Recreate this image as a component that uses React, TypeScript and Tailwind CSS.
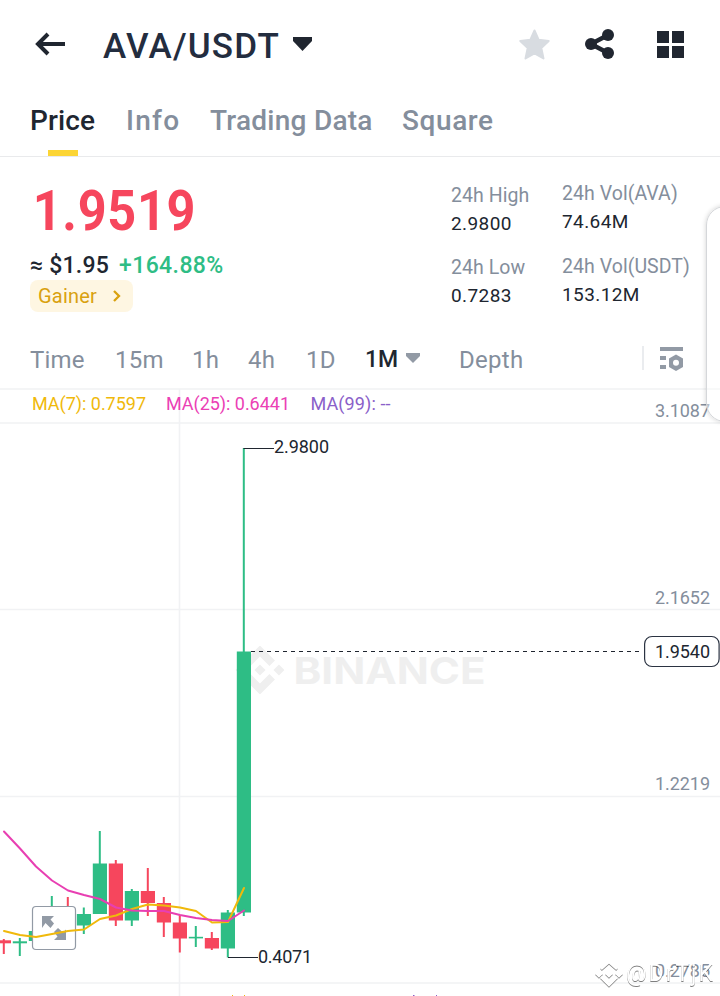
import { SiBinance } from 'react-icons/si'

const tabs = [
  { label: 'Price', active: true, className: 'w-[65px] tracking-[0.1px]' },
  { label: 'Info', active: false, className: 'w-[54px] pl-px tracking-[1.3px]' },
  { label: 'Trading Data', active: false, className: 'w-[162px] pl-px tracking-[0.25px]' },
  { label: 'Square', active: false, className: 'w-[92px] pl-px tracking-[0.6px]' }
]

const stats = [
  [
    { label: '24h High', value: '2.9800' },
    { label: '24h Low', value: '0.7283' }
  ],
  [
    { label: '24h Vol(AVA)', value: '74.64M' },
    { label: '24h Vol(USDT)', value: '153.12M' }
  ]
]

const intervals = [
  { label: 'Time', className: 'w-[85px]' },
  { label: '15m', className: 'w-[77px]' },
  { label: '1h', className: 'w-[56px]' },
  { label: '4h', className: 'w-[58px]' },
  { label: '1D', className: 'w-[59px]' }
]

const UP = '#2ebd85'
const DOWN = '#f6465d'

// x, body top, body bottom, wick top, wick bottom, colour
const candles: [number, number, number, number, number, string][] = [
  [4, 940.3, 943.3, 939, 954, DOWN],
  [20, 941.3, 943.3, 938, 956, UP],
  [36, 931, 941, 931, 941, UP],
  [52, 908, 930, 896, 935, UP],
  [68, 908, 930, 897, 935, DOWN],
  [84, 914, 925.5, 907.5, 934, UP],
  [100, 863.5, 914, 831, 914, UP],
  [116, 863.5, 920.5, 860, 926, DOWN],
  [132, 891, 920.5, 889, 926, UP],
  [148, 891, 903, 868, 916, DOWN],
  [164, 903, 922.5, 897, 937, DOWN],
  [180, 922.5, 938.5, 915, 952.5, DOWN],
  [196, 936.8, 938.4, 926, 947, UP],
  [212, 938, 948.5, 932, 950, DOWN],
  [228, 912.5, 948.5, 910, 957.5, UP],
  [244, 651.5, 912.5, 448, 916, UP]
]

const ma7 = '4,931 20,935 36,937 52,934 68,931 84,929.5 100,919 116,915.5 132,909 148,904.5 164,905.5 180,907.5 196,911 212,922.5 228,922 244,888'
const ma25 = '4,831.5 20,848.5 36,866.5 52,880.5 68,890.5 84,895 100,899 116,907.5 132,910.5 148,911 164,911 180,915 196,918 212,920 228,921 244,910.5'

const prices = [
  { y: 417, text: '3.1087' },
  { y: 604, text: '2.1652' },
  { y: 790, text: '1.2219' },
  { y: 977, text: '0.2785' }
]

const Header = () => (
  <header className="flex h-[88px] items-center pl-[35px] pr-9 text-[#1e2329]">
    <svg width="31" height="24" viewBox="0 0 31 24" fill="none" stroke="#202630" strokeWidth="4" className="mr-9">
      <path d="M30 12H3M13 2 3 12l10 10" />
    </svg>
    <h1 className="w-[191px] pl-px pt-1 text-[35px] font-medium leading-none tracking-[1.2px] text-[#232d3f]">AVA/USDT</h1>
    <svg width="19" height="14" viewBox="0 0 19 14" fill="#202630">
      <path d="M0 0h19v4L9.500 14 0 4z" />
    </svg>
    <div className="ml-auto flex items-center">
      <svg width="31" height="31" viewBox="0 0 31 31" fill="#d8dce1" stroke="#d8dce1" strokeWidth="2" strokeLinejoin="round" className="mr-[35px]">
        <path d="m15.500 1.500 4.200 9.300 10 1.200-7.400 6.900 2.200 10.600-9-5.200-9 5.200 2.200-10.600L1.300 12l10-1.200z" />
      </svg>
      <svg width="30" height="30" viewBox="0 0 30 30" fill="#202630" className="mr-[42px]">
        <path d="M23 6 6 15l17 9" fill="none" stroke="#202630" strokeWidth="4.500" />
        <circle cx="6" cy="15" r="6" />
        <circle cx="23" cy="6" r="6" />
        <circle cx="23" cy="24" r="6" />
      </svg>
      <div className="grid h-[27px] w-[27px] grid-cols-2 gap-[3px]">
        <div className="bg-[#202630]" />
        <div className="bg-[#202630]" />
        <div className="bg-[#202630]" />
        <div className="bg-[#202630]" />
      </div>
    </div>
  </header>
)

const Tabs = () => (
  <nav className="flex h-[69px] gap-[30px] border-b border-[#e9eaec] pl-[30px] text-[28px]">
    {tabs.map((tab) => (
      <div key={tab.label} className="flex flex-col items-center justify-between">
        <div
          className={`pt-[11px] font-medium leading-[44px] whitespace-nowrap ${tab.className} ${
            tab.active ? 'text-[#202630]' : 'text-[#848e9c]'
          }`}
        >
          {tab.label}
        </div>
        {tab.active && <div className="h-1.5 w-[30px] bg-[#fcd535]" />}
      </div>
    ))}
  </nav>
)

const Summary = () => (
  <section className="flex h-[173px] pl-[30px]">
    <div className="w-[421px] pt-[26px]">
      <div className="origin-left scale-x-[0.9] pl-[3px] text-[56px] font-bold leading-[56px] tracking-[0.8px] text-[#f6465d]">1.9519</div>
      <div className="flex gap-2.5 pt-3 text-[23px] font-medium leading-[29px] whitespace-nowrap">
        <span className="w-[79px] tracking-[0.2px] text-[#202630]">≈ $1.95</span>
        <span className="tracking-[0.4px] text-[#2ebd85]">+164.88%</span>
      </div>
      <div className="flex h-8 w-[103px] items-center rounded-lg bg-[#fef6e2] pl-2 text-xl text-[#d9a10f]">
        <span className="w-[74px] tracking-[0.2px]">Gainer</span>
        <svg width="9" height="12" viewBox="0 0 9 12" fill="none" stroke="#d9a10f" strokeWidth="2.300">
          <path d="m2 1 5 5-5 5" />
        </svg>
      </div>
    </div>
    {stats.map((column, index) => (
      <div key={column[0].label} className={index === 0 ? 'w-[111px] pt-[25px]' : 'w-[150px] pt-[23px]'}>
        {column.map((stat) => (
          <div key={stat.label} className={`whitespace-nowrap ${index === 0 ? 'h-[72px]' : 'h-[73px]'}`}>
            <div className="text-[19.500px] leading-7 tracking-[0.05px] text-[#848e9c]">{stat.label}</div>
            <div className="text-[19px] leading-7 tracking-[0.4px] text-[#202630]">{stat.value}</div>
          </div>
        ))}
      </div>
    ))}
  </section>
)

const Intervals = () => (
  <div className="flex h-[58px] items-center pl-[30px] text-2xl text-[#848e9c]">
    {intervals.map((item) => (
      <span key={item.label} className={`${item.className} pt-0.5 tracking-[0.2px]`}>{item.label}</span>
    ))}
    <span className="w-[41px] pt-[3px] text-[23px] font-medium text-[#202630]">1M</span>
    <svg width="14" height="10" viewBox="0 0 14 10" fill="#929aa5" className="mb-0.5">
      <path d="M0 0h14v3L7 10 0 3z" />
    </svg>
    <span className="ml-[39px] pt-0.5 tracking-[0.3px]">Depth</span>
    <div className="mb-0.5 ml-auto mr-[16px] h-6 w-0.5 bg-[#eaecef]" />
    <svg width="24" height="25" viewBox="0 0 24 25" fill="#929aa5" className="mr-[36px]">
      <path d="M0 0h23v4H0zM0 9h6v4H0zM0 18h6v4H0z" />
      <path fillRule="evenodd" d="M16 7.500 23 11.500v8.500l-7 4-7-4v-8.500zM16 12.800a3 3 0 1 0 0 6 3 3 0 0 0 0-6z" />
    </svg>
  </div>
)

const Chart = () => (
  <svg width="720" height="608" viewBox="0 388 720 608" className="block">
    <path d="M0 389h720M0 423h720M0 609.500h720M0 796.500h720M0 983h720M179.500 389v607" stroke="#f1f2f4" strokeWidth="1.600" fill="none" />

    <SiBinance x="235.500" y="645.500" size={49} color="#efefef" />
    <text x="293.500" y="684" fontFamily="Inter" fontWeight="700" fontSize="37.500" fill="#efefef" textLength="192" lengthAdjust="spacingAndGlyphs">BINANCE</text>

    <g fontSize="18">
      <text x="32" y="410" fill="#f0b90b" textLength="114">MA(7): 0.7597</text>
      <text x="166" y="410" fill="#eb40b5" textLength="124">MA(25): 0.6441</text>
      <text x="310.500" y="410" fill="#8a60c9" textLength="80">MA(99): --</text>
      {prices.map((price) => (
        <text key={price.text} x="655" y={price.y} fill="#848e9c" textLength="55">{price.text}</text>
      ))}
    </g>

    {candles.map(([x, top, bottom, high, low, colour]) => (
      <g key={x} fill={colour}>
        <rect x={x - 1.2} y={high} width="2" height={low - high} />
        <rect x={x - 7.2} y={top} width="14.200" height={bottom - top} />
      </g>
    ))}

    {/* High and low callouts */}
    <path d="M243.500 448.500H274M228 957.500H258" stroke="#202630" strokeWidth="1.200" fill="none" />
    <g fontSize="18" fill="#202630">
      <text x="274" y="453" textLength="55">2.9800</text>
      <text x="258" y="963" textLength="54">0.4071</text>
    </g>

    {/* Last price */}
    <path d="M251 651.500H641" stroke="#202630" strokeDasharray="4 4" fill="none" />
    <rect x="644.600" y="636.500" width="74.500" height="30" rx="7.500" fill="#fff" stroke="#2b3342" strokeWidth="1.200" />
    <text x="655" y="658" fontSize="18" fill="#202630" textLength="55">1.9540</text>

    {/* Fullscreen button */}
    <rect x="32.500" y="906.500" width="43" height="43" rx="3.500" fill="#fff" stroke="#929aa5" strokeWidth="1.200" />
    <path d="M42 916h12l-3.500 3.500 3.500 4-3.500 4.500-5-5L42 928zM66 940H54l3.500-3.500-3.500-4.500 4-4 5 4.500 3-3z" fill="#929aa5" />

    <g fill="none" strokeWidth="2" strokeLinejoin="round" strokeLinecap="round">
      <polyline points={ma7} stroke="#f0b90b" />
      <polyline points={ma25} stroke="#e83fb2" />
    </g>

    {/* Tops of the volume legend */}
    <path d="M232 995.500h1M244 995.500h1" stroke="#f0b90b" />
    <path d="M413 995.500h1.500M436 995.500h1" stroke="#8a60c9" />

    {/* Author watermark */}
    <g className="drop-shadow-[0_1px_0.6px_rgba(0,0,0,0.5)]">
      <g fill="none" stroke="#fff" strokeWidth="2.500">
        <path d="m601 969 8-7 8 7M601 977l8 8 8-8M596 973l3 3 3-3M616 973l3 3 3-3M606 973l3 3 3-3" />
      </g>
      <text x="626" y="981" fontSize="23" fill="#fff" textLength="87">@DrTjK</text>
    </g>
  </svg>
)

const App = () => {
  return (
    <main className="relative h-[996px] w-[720px] overflow-hidden bg-white font-[Roboto,sans-serif]">
      <Header />
      <Tabs />
      <Summary />
      <Intervals />
      <Chart />
      {/* Edge panel handle */}
      <div className="absolute -right-6 top-[206px] h-[216px] w-[38px] rounded-[26px] border border-[#d5d7da] bg-white/40 shadow-[0_0_5px_rgba(0,0,0,0.18)]" />
    </main>
  )
}

export default App
